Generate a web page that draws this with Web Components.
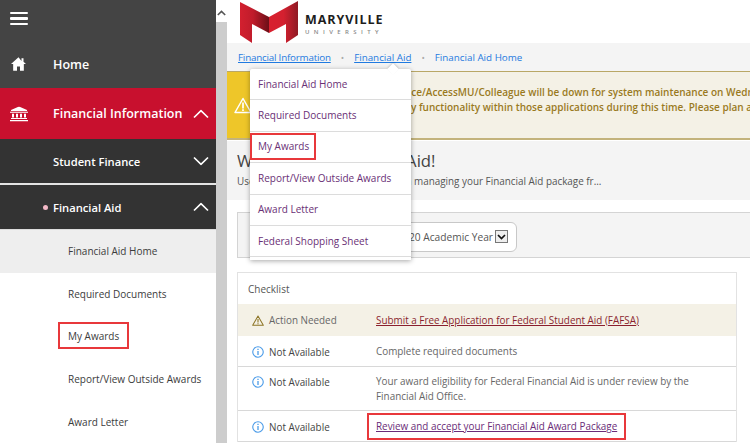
<!DOCTYPE html>
<html>
<head>
<meta charset="utf-8">
<title>Financial Aid Home</title>
<style>
html,body{margin:0;padding:0;height:100%;overflow:hidden;background:#fff;font-family:"Open Sans",sans-serif;}
body{display:flex;width:750px;height:443px;}
</style>
</head>
<body>
<side-nav>
    <nav-row kind="top" icon="home" label="Home"></nav-row>
    <nav-row kind="active" icon="bank" label="Financial Information" arrow="up"></nav-row>
    <nav-row kind="sub" label="Student Finance" arrow="down"></nav-row>
    <nav-row kind="sub open" label="Financial Aid" arrow="up" dot></nav-row>
    <nav-link current>Financial Aid Home</nav-link>
    <nav-link>Required Documents</nav-link>
    <nav-link marked>My Awards</nav-link>
    <nav-link>Report/View Outside Awards</nav-link>
    <nav-link>Award Letter</nav-link>
</side-nav>
<scroll-rail></scroll-rail>
<main-pane>
    <site-logo></site-logo>
    <bread-crumbs></bread-crumbs>
    <alert-banner></alert-banner>
    <page-title></page-title>
    <year-bar></year-bar>
    <check-list>
        <check-row kind="warn" status="Action Needed">Submit a Free Application for Federal Student Aid (FAFSA)</check-row>
        <check-row kind="info" status="Not Available">Complete required documents</check-row>
        <check-row kind="info" status="Not Available" tall>Your award eligibility for Federal Financial Aid is under review by the Financial Aid Office.</check-row>
        <check-row kind="info" status="Not Available" marked>Review and accept your Financial Aid Award Package</check-row>
    </check-list>
    <aid-menu></aid-menu>
</main-pane>

<script>
const ICONS = {
    home: `<svg width="15" height="14" viewBox="0 0 18 16"><path fill="#fff" d="M9 0 0 8h2.600v8h4.600v-5h3.600v5h4.600V8H18l-3-2.700V1.200h-2.400v3.300z"/></svg>`,
    bank: `<svg width="18" height="15" viewBox="0 0 18 15"><path fill="#fff" d="M9 0 1 3.400V4.600h16V3.400zM0 5.200h18v1H0zM2 7.200h2v3.800H2zM6 7.200h2v3.800H6zM10 7.200h2v3.800h-2zM14 7.200h2v3.800h-2zM1 11.600h16v1H1zM0 13.400h18V15H0z"/></svg>`,
    up: `<svg width="16" height="9" viewBox="0 0 16 9"><path fill="none" stroke="#fff" stroke-width="1.700" d="M1 8 8 1.200 15 8"/></svg>`,
    down: `<svg width="16" height="9" viewBox="0 0 16 9"><path fill="none" stroke="#fff" stroke-width="1.700" d="M1 1l7 6.800L15 1"/></svg>`,
    warn: `<svg width="12" height="11" viewBox="0 0 13 12"><path fill="none" stroke="#8d7526" stroke-width="1.100" stroke-linejoin="round" d="M6.500 1 12.300 11.300H.7z"/><path stroke="#8d7526" stroke-width="1.200" d="M6.500 4.300v4M6.500 9v1.200"/></svg>`,
    info: `<svg width="12" height="12" viewBox="0 0 13 13"><circle cx="6.500" cy="6.500" r="5.700" fill="none" stroke="#4a9be8" stroke-width="1.200"/><path stroke="#4a9be8" stroke-width="1.400" d="M6.500 5.400v4.300M6.500 3v1.400"/></svg>`
};

class SideNav extends HTMLElement {
    constructor(){
        super();
        this.attachShadow({mode:'open'});
    }
    connectedCallback(){
        this.shadowRoot.innerHTML = `
        <style>
        :host{display:block;flex:none;width:216px;height:443px;background:#fff;overflow:hidden;}
        .burger{height:42px;background:#444;padding:12px 0 0 10px;box-sizing:border-box;display:flex;flex-direction:column;gap:3px;}
        .burger i{display:block;width:18px;height:2.400px;background:#fff;border-radius:1px;}
        </style>
        <div class="burger"><i></i><i></i><i></i></div>
        <slot></slot>`;
    }
}
customElements.define('side-nav', SideNav);

class NavRow extends HTMLElement {
    constructor(){
        super();
        this.attachShadow({mode:'open'});
    }
    connectedCallback(){
        const icon = this.getAttribute('icon');
        const arrow = this.getAttribute('arrow');
        this.shadowRoot.innerHTML = `
        <style>
        :host{display:flex;align-items:center;position:relative;color:#fff;font-weight:600;box-sizing:border-box;}
        :host([kind="top"]){height:46px;background:#444;font-size:12.500px;padding-bottom:2px;}
        :host([kind="active"]){height:51px;background:#c8102e;font-size:12.500px;}
        :host([kind~="sub"]){height:44px;background:#333;font-size:11.200px;}
        :host([kind~="open"]){height:47px;border-top:2px solid #e4e4e4;border-bottom:1px solid #ddd;}
        .icon{position:absolute;left:10px;top:50%;transform:translateY(-50%);display:flex;}
        :host([icon="home"]) .icon{left:11px;margin-top:-1px;}
        .label{margin-left:53px;}
        .arrow{position:absolute;right:7px;top:50%;transform:translateY(-50%);display:flex;}
        .dot{position:absolute;left:43px;top:50%;width:5px;height:5px;margin-top:-2px;border-radius:50%;background:#f2b8c6;}
        </style>
        ${icon ? `<span class="icon">${ICONS[icon]}</span>` : ''}
        ${this.hasAttribute('dot') ? `<span class="dot"></span>` : ''}
        <span class="label">${this.getAttribute('label')}</span>
        ${arrow ? `<span class="arrow">${ICONS[arrow]}</span>` : ''}`;
    }
}
customElements.define('nav-row', NavRow);

class NavLink extends HTMLElement {
    constructor(){
        super();
        this.attachShadow({mode:'open'});
        this.shadowRoot.innerHTML = `
        <style>
        :host{display:flex;align-items:center;height:42.600px;box-sizing:border-box;padding:0 0 0 68px;color:#3c3c3c;font-size:10px;}
        :host([current]){background:#eeeeee;}
        .txt{position:relative;}
        :host([marked]) .txt::after{content:"";position:absolute;left:-10px;right:-10px;top:-7px;bottom:-6px;border:2px solid #e8383b;}
        </style>
        <span class="txt"><slot></slot></span>`;
    }
}
customElements.define('nav-link', NavLink);

class ScrollRail extends HTMLElement {
    constructor(){
        super();
        this.attachShadow({mode:'open'});
        this.shadowRoot.innerHTML = `
        <style>
        :host{display:flex;flex-direction:column;flex:none;width:11px;height:443px;background:#cdcdcd;}
        .btn{height:22px;background:#fff;display:flex;justify-content:center;padding-top:10px;box-sizing:border-box;}
        </style>
        <div class="btn"><svg width="9" height="6" viewBox="0 0 9 6"><path fill="none" stroke="#555" stroke-width="1.600" d="M.8 5 4.500 1.400 8.200 5"/></svg></div>`;
    }
}
customElements.define('scroll-rail', ScrollRail);

class MainPane extends HTMLElement {
    constructor(){
        super();
        this.attachShadow({mode:'open'});
        this.shadowRoot.innerHTML = `
        <style>
        :host{display:block;position:relative;flex:1;min-width:0;height:443px;overflow:hidden;background:#fff;}
        </style>
        <slot></slot>`;
    }
}
customElements.define('main-pane', MainPane);

class SiteLogo extends HTMLElement {
    constructor(){
        super();
        this.attachShadow({mode:'open'});
        this.shadowRoot.innerHTML = `
        <style>
        :host{display:flex;height:43px;box-sizing:border-box;padding-left:13px;color:#222;}
        .word{margin:12px 0 0 6px;display:flex;flex-direction:column;}
        .m{font:700 12.500px/15px "Open Sans",sans-serif;letter-spacing:.95px;color:#1d1d1d;}
        .u{font:600 6px/9px "Open Sans",sans-serif;letter-spacing:4.400px;color:#8a8a8a;margin-top:1px;}
        </style>
        <svg width="59" height="43" viewBox="0 0 59 43">
            <defs>
                <linearGradient id="l" x1="0" x2="1" y1="0" y2="0"><stop offset="0" stop-color="#d3202f"/><stop offset=".45" stop-color="#c01c2b"/><stop offset="1" stop-color="#6c0f17"/></linearGradient>
                <linearGradient id="r" x1="0" x2="1" y1="0" y2="0"><stop offset="0" stop-color="#d8202f"/><stop offset=".5" stop-color="#d4202f"/><stop offset="1" stop-color="#8f1a24"/></linearGradient>
            </defs>
            <path fill="url(#l)" d="M0 2 29 17V33L12 24V43L0 35z"/>
            <path fill="url(#r)" d="M29 17 58 1V35L46 43V24L29 33z"/>
        </svg>
        <div class="word"><span class="m">MARYVILLE</span><span class="u">UNIVERSITY</span></div>`;
    }
}
customElements.define('site-logo', SiteLogo);

class BreadCrumbs extends HTMLElement {
    constructor(){
        super();
        this.attachShadow({mode:'open'});
        this.shadowRoot.innerHTML = `
        <style>
        :host{display:flex;align-items:center;gap:10px;height:28px;padding-left:11px;background:#f4f4f4;font-size:9.800px;color:#1f7ae0;}
        a{color:#1f7ae0;text-decoration:underline;}
        a.first{letter-spacing:-.2px;}
        i{font-style:normal;color:#aaa;font-size:9px;}
        </style>
        <a class="first">Financial Information</a><i>•</i><a>Financial Aid</a><i>•</i><span>Financial Aid Home</span>`;
    }
}
customElements.define('bread-crumbs', BreadCrumbs);

class AlertBanner extends HTMLElement {
    constructor(){
        super();
        this.attachShadow({mode:'open'});
        this.shadowRoot.innerHTML = `
        <style>
        :host{display:flex;height:69px;box-sizing:border-box;background:#f4f1e6;border-top:1px solid #b9a766;border-bottom:2px solid #c3b37c;overflow:hidden;}
        .tag{flex:none;width:60px;background:#eec629;display:flex;align-items:center;padding-left:7px;box-sizing:border-box;}
        .msg{flex:none;margin:13px 0 0 0;padding-left:18px;font-size:10px;line-height:14.500px;font-weight:600;color:#9a7a1e;white-space:nowrap;}
        </style>
        <div class="tag"><svg width="18" height="17" viewBox="0 0 18 17"><path fill="none" stroke="#fff" stroke-width="1.500" stroke-linejoin="round" d="M9 1.500 17 15.500H1z"/><path stroke="#fff" stroke-width="1.700" d="M9 5.500v6M9 12.300v1.600"/></svg></div>
        <div class="msg">WebAdvisor/Self-Service/AccessMU/Colleague will be down for system maintenance on Wednesday<br>Users will not have any functionality within those applications during this time. Please plan accordingly.</div>`;
    }
}
customElements.define('alert-banner', AlertBanner);

class PageTitle extends HTMLElement {
    constructor(){
        super();
        this.attachShadow({mode:'open'});
        this.shadowRoot.innerHTML = `
        <style>
        :host{display:block;height:59px;box-sizing:border-box;margin-top:1px;padding:7px 0 0 10px;background:#f4f4f4;color:#444;}
        h1{margin:0;font-size:16.700px;line-height:25px;font-weight:400;}
        p{margin:0;font-size:9.900px;line-height:16px;color:#555;white-space:nowrap;}
        </style>
        <h1>Welcome to Financial Aid!</h1>
        <p>Use the steps below to assist you with managing your Financial Aid package fr...</p>`;
    }
}
customElements.define('page-title', PageTitle);

class YearBar extends HTMLElement {
    constructor(){
        super();
        this.attachShadow({mode:'open'});
        this.shadowRoot.innerHTML = `
        <style>
        :host{display:flex;align-items:center;height:46px;box-sizing:border-box;margin:12px 0 0 10px;padding:3px 0 0 119px;background:#f4f4f4;border:1px solid #d4d4d4;border-right:0;}
        .pick{display:flex;align-items:center;justify-content:flex-end;gap:2px;width:160px;height:30px;box-sizing:border-box;padding:0 8px 0 0;background:#fff;border:1px solid #c8c8c8;border-radius:6px;font-size:10.200px;color:#555;}
        .box{display:flex;align-items:center;justify-content:center;width:13px;height:13px;box-sizing:border-box;border:1px solid #777;background:#eee;}
        </style>
        <div class="pick"><span>2019-2020 Academic Year</span><span class="box"><svg width="9" height="6" viewBox="0 0 9 6"><path fill="none" stroke="#111" stroke-width="1.700" d="M1 1l3.500 3.500L8 1"/></svg></span></div>`;
    }
}
customElements.define('year-bar', YearBar);

class CheckList extends HTMLElement {
    constructor(){
        super();
        this.attachShadow({mode:'open'});
        this.shadowRoot.innerHTML = `
        <style>
        :host{display:block;width:500px;box-sizing:border-box;margin:14px 0 0 10px;background:#fff;border:1px solid #e2e2e2;border-bottom:0;}
        .head{height:31px;display:flex;align-items:center;padding-left:10px;font-size:10px;color:#555;}
        </style>
        <div class="head">Checklist</div>
        <slot></slot>`;
    }
}
customElements.define('check-list', CheckList);

class CheckRow extends HTMLElement {
    constructor(){
        super();
        this.attachShadow({mode:'open'});
    }
    connectedCallback(){
        const warn = this.getAttribute('kind') == 'warn';
        const marked = this.hasAttribute('marked');
        this.shadowRoot.innerHTML = `
        <style>
        :host{display:grid;grid-template-columns:138px 1fr;align-items:center;height:31px;box-sizing:border-box;border-bottom:1px solid #d8d8d8;font-size:9.900px;color:#666;}
        :host([kind="warn"]){background:#f4f1e6;border-bottom:0;height:32px;}
        :host([tall]){height:44px;align-items:start;padding-top:7px;}
        .st{display:flex;align-items:center;gap:5px;padding:1px 0 0 14px;color:#444;}
        :host([kind="warn"]) .st{color:#666;padding-top:0;}
        .ic{display:flex;}
        .val{line-height:14.700px;padding-right:40px;}
        :host([marked]) .val{padding-top:1px;}
        :host([kind="warn"]) .val{color:#8a1f2e;text-decoration:underline;}
        .mark{color:#6a2c78;text-decoration:underline;position:relative;}
        .mark::after{content:"";position:absolute;left:-9px;right:-9px;top:-6px;bottom:-7px;border:2px solid #e8383b;}
        </style>
        <div class="st"><span class="ic">${warn ? ICONS.warn : ICONS.info}</span><span>${this.getAttribute('status')}</span></div>
        <div class="val">${marked ? `<span class="mark"><slot></slot></span>` : `<slot></slot>`}</div>`;
    }
}
customElements.define('check-row', CheckRow);

class AidMenu extends HTMLElement {
    constructor(){
        super();
        this.attachShadow({mode:'open'});
        this.shadowRoot.innerHTML = `
        <style>
        :host{position:absolute;left:23px;top:69px;width:161px;height:191px;background:#fff;box-shadow:0 1px 5px rgba(0,0,0,.35);border-radius:2px 2px 0 0;}
        .clip{height:191px;overflow:hidden;}
        .caret{position:absolute;right:14px;top:-4px;width:8px;height:8px;background:#fff;transform:rotate(45deg);box-shadow:-1px -1px 2px rgba(0,0,0,.15);}
        a{display:flex;align-items:center;height:31.400px;box-sizing:border-box;padding:0 0 1px 8px;border-bottom:1px solid #dcdcdc;font-size:10px;color:#6a3076;position:relative;}
        a.on span{position:relative;}
        a.on span::after{content:"";position:absolute;left:-8px;right:-7px;top:-6px;bottom:-7px;border:2px solid #e8383b;}
        </style>
        <div class="caret"></div>
        <div class="clip">
        <a><span>Financial Aid Home</span></a>
        <a><span>Required Documents</span></a>
        <a class="on"><span>My Awards</span></a>
        <a><span>Report/View Outside Awards</span></a>
        <a><span>Award Letter</span></a>
        <a><span>Federal Shopping Sheet</span></a>
        </div>`;
    }
}
customElements.define('aid-menu', AidMenu);
</script>
</body>
</html>
